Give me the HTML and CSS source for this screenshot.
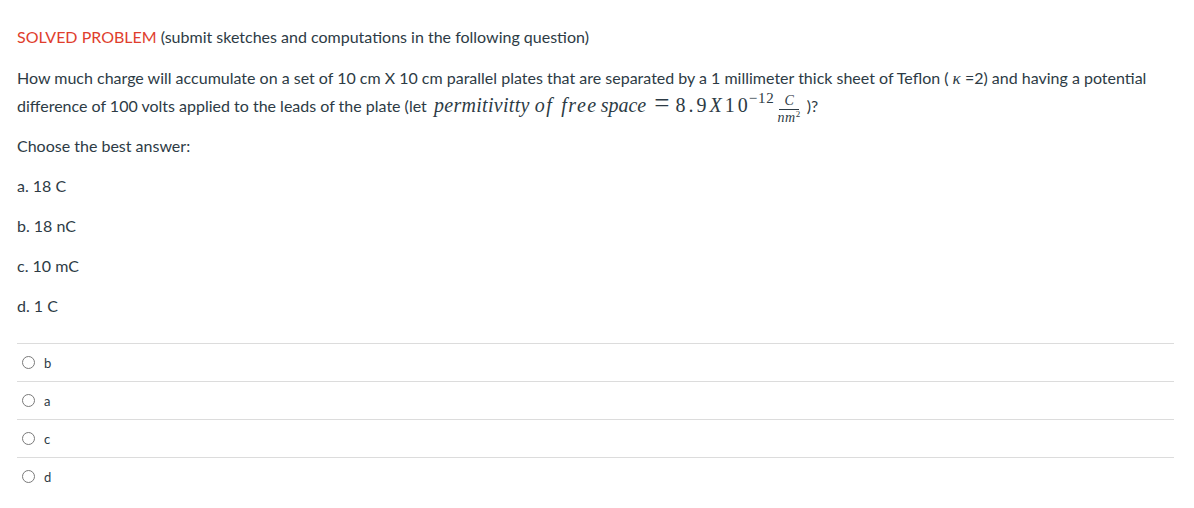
FILE: index.html
```html
<!DOCTYPE html>
<html>
<head>
<meta charset="utf-8">
<link rel="stylesheet" href="styles.css">
</head>
<body>
<div class="question">
  <p class="title"><span class="red">SOLVED PROBLEM</span> (submit sketches and computations in the following question)</p>
  <p class="body">How much charge will accumulate on a set of 10 cm X 10 cm parallel plates that are separated by a 1 millimeter thick sheet of Teflon ( <span class="m">κ</span> =2) and having a potential difference of 100 volts applied to the leads of the plate (let <span class="math"><span class="mi w1">permitivitty</span><span class="mi w2">of</span><span class="mi w3">free</span><span class="mi w4">space</span><span class="mo">=</span><span class="num8">8.9<span class="mi">X</span>10</span><sup class="sup">−12</sup><span class="frac"><span class="num">C</span><span class="den">nm<sup>2</sup></span></span></span> )?</p>
  <p>Choose the best answer:</p>
  <p>a. 18 C</p>
  <p>b. 18 nC</p>
  <p>c. 10 mC</p>
  <p>d. 1 C</p>
  <div class="answers">
    <label class="opt"><span class="radio"></span><span>b</span></label>
    <label class="opt"><span class="radio"></span><span>a</span></label>
    <label class="opt"><span class="radio"></span><span>c</span></label>
    <label class="opt"><span class="radio"></span><span>d</span></label>
  </div>
</div>
</body>
</html>
```
FILE: styles.css
```css
html, body { margin: 0; padding: 0; background: #fff; }
body {
  font-family: Lato, "Liberation Sans", sans-serif;
  font-size: 16px;
  color: #2d3b45;
}
.question { padding: 0 20px 0 17px; }
p { margin: 0 0 18px 0; line-height: 22px; }
.title { margin-top: 26px; margin-bottom: 16px; }
.red { color: #e03e2d; }
.body { line-height: 27px; margin-bottom: 16px; }
.m { font-family: "Liberation Serif", serif; font-style: italic; font-size: 17px; }
.math { font-family: "Liberation Serif", "DejaVu Serif", serif; font-size: 20px; line-height: 0; margin-left: 3px; }
.mi { font-style: italic; }
.w1 { margin-right: 5px; letter-spacing: 0.3px; }
.w2 { margin-right: 8px; letter-spacing: 1.5px; }
.w3 { margin-right: 3px; letter-spacing: 1.5px; }
.w4 { letter-spacing: 0; }
.mo { margin: 0 6px 0 8px; font-size: 27px; }
.num8 { letter-spacing: 3px; }
.sup { font-size: 15px; vertical-align: 9px; line-height: 0; margin-left: -2px; letter-spacing: 0.8px; }
.frac { display: inline-flex; flex-direction: column; align-items: center; vertical-align: 7px; font-family: "Liberation Serif", "DejaVu Serif", serif; font-style: italic; font-size: 14px; line-height: 12px; margin: -9px 2px -9px 3px; }
.frac .num { border-bottom: 1px solid #2d3b45; padding: 0 5px 2px; }
.frac .den { padding-top: 2px; letter-spacing: 0.5px; }
.frac sup { font-size: 9px; vertical-align: 5px; line-height: 0; font-style: normal; }
.answers { margin-top: 26px; }
.opt {
  display: flex; align-items: center; gap: 9px;
  height: 37px; border-top: 1px solid #dcdcdc;
  font-size: 13px; padding-left: 5px;
}
.radio { width: 11px; height: 11px; border: 1px solid #7a7a7a; border-radius: 50%; }
```
